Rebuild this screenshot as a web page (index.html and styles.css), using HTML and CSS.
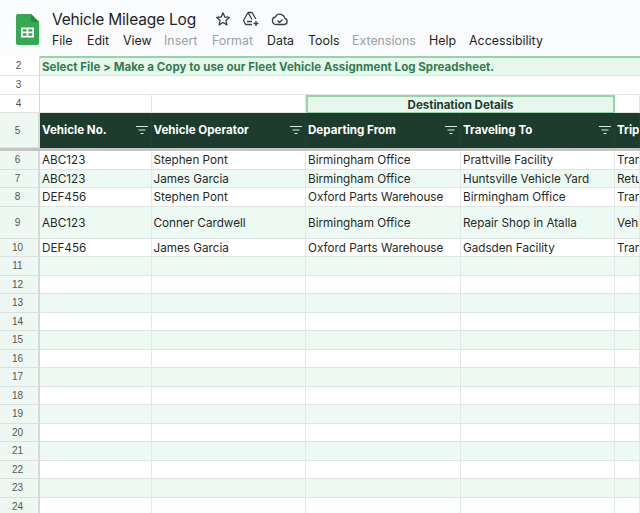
FILE: index.html
```html
<!DOCTYPE html>
<html lang="en">
<head>
<meta charset="utf-8">
<title>Vehicle Mileage Log</title>
<link rel="stylesheet" href="styles.css">
</head>
<body>
<header class="topbar">
  <svg class="logo" width="23" height="31" viewBox="0 0 23 31">
    <path d="M2 0H15L23 8V29a2 2 0 0 1-2 2H2a2 2 0 0 1-2-2V2a2 2 0 0 1 2-2z" fill="#34a853"/>
    <path d="M15 0L23 8H17a2 2 0 0 1-2-2z" fill="#1e8e3e"/>
    <path d="M5 13.500H18V23.500H5zM6.700 15.200V17.600H10.600V15.200zM12.300 15.200V17.600H16.300V15.200zM6.700 19.300V21.800H10.600V19.300zM12.300 19.300V21.800H16.300V19.300z" fill="#fff" fill-rule="evenodd"/>
  </svg>
  <div class="docinfo">
    <div class="titleline">
      <span class="title">Vehicle Mileage Log</span>
      <span class="icons">
        <svg width="16" height="16" viewBox="0 0 16 16" fill="none" stroke="#3c4043" stroke-width="1.300" stroke-linejoin="round"><path d="M8 1.800l1.800 4.200 4.500.4-3.400 3 1 4.500L8 11.500l-3.900 2.400 1-4.500-3.400-3 4.500-.4z"/></svg>
        <svg width="18" height="16" viewBox="0 0 18 16" fill="none" stroke="#3c4043" stroke-width="1.300" stroke-linejoin="round"><path d="M6 1.500h4l3.800 6.500M6 1.500L1.500 9.500l2.200 4h6.300M6 1.500l4 7M5 10.500h5"/><path d="M14 10v5M11.500 12.500h5" stroke-width="1.400"/></svg>
        <svg width="18" height="14" viewBox="0 0 18 14" fill="none" stroke="#3c4043" stroke-width="1.300" stroke-linejoin="round"><path d="M5 12.500a3.800 3.800 0 0 1-.6-7.500 5 5 0 0 1 9.400 1.400 3.100 3.100 0 0 1-.5 6.100z"/><path d="M6.500 8.500l2 2 3-3"/></svg>
      </span>
    </div>
    <nav class="menu">
      <span class="m-file">File</span><span class="m-edit">Edit</span><span class="m-view">View</span><span class="m-insert off">Insert</span><span class="m-format off">Format</span><span class="m-data">Data</span><span class="m-tools">Tools</span><span class="m-ext off">Extensions</span><span class="m-help">Help</span><span>Accessibility</span>
    </nav>
  </div>
</header>

<main class="sheet">
  <div class="row h-note">
    <div class="rh rh-plain">2</div>
    <div class="note">Select File &gt; Make a Copy to use our Fleet Vehicle Assignment Log Spreadsheet.</div>
  </div>
  <div class="row h-blank">
    <div class="rh rh-plain">3</div>
    <div class="wide"></div>
  </div>
  <div class="row h-blank">
    <div class="rh rh-plain">4</div>
    <div class="c"></div><div class="c"></div>
    <div class="group">Destination Details</div>
    <div class="c"></div>
  </div>
  <div class="row h-head">
    <div class="rh">5</div>
    <div class="hc"><span>Vehicle No.</span><svg class="flt" width="12" height="8" viewBox="0 0 12 8"><path d="M0 .5h12M2.500 4h7M4.500 7.500h3" stroke="#dfe6e2" stroke-width="1"/></svg></div>
    <div class="hc"><span>Vehicle Operator</span><svg class="flt" width="12" height="8" viewBox="0 0 12 8"><path d="M0 .5h12M2.500 4h7M4.500 7.500h3" stroke="#dfe6e2" stroke-width="1"/></svg></div>
    <div class="hc"><span>Departing From</span><svg class="flt" width="12" height="8" viewBox="0 0 12 8"><path d="M0 .5h12M2.500 4h7M4.500 7.500h3" stroke="#dfe6e2" stroke-width="1"/></svg></div>
    <div class="hc"><span>Traveling To</span><svg class="flt" width="12" height="8" viewBox="0 0 12 8"><path d="M0 .5h12M2.500 4h7M4.500 7.500h3" stroke="#dfe6e2" stroke-width="1"/></svg></div>
    <div class="hc"><span>Trip</span></div>
  </div>
  <div class="freeze"></div>
  <div class="row h-data">
    <div class="rh">6</div><div class="c">ABC123</div><div class="c">Stephen Pont</div><div class="c">Birmingham Office</div><div class="c">Prattville Facility</div><div class="c">Transport</div>
  </div>
  <div class="row h-data alt">
    <div class="rh">7</div><div class="c">ABC123</div><div class="c">James Garcia</div><div class="c">Birmingham Office</div><div class="c">Huntsville Vehicle Yard</div><div class="c">Return</div>
  </div>
  <div class="row h-data">
    <div class="rh">8</div><div class="c">DEF456</div><div class="c">Stephen Pont</div><div class="c">Oxford Parts Warehouse</div><div class="c">Birmingham Office</div><div class="c">Transport</div>
  </div>
  <div class="row h-tall alt">
    <div class="rh">9</div><div class="c">ABC123</div><div class="c">Conner Cardwell</div><div class="c">Birmingham Office</div><div class="c">Repair Shop in Atalla</div><div class="c">Vehicle</div>
  </div>
  <div class="row h-data">
    <div class="rh">10</div><div class="c">DEF456</div><div class="c">James Garcia</div><div class="c">Oxford Parts Warehouse</div><div class="c">Gadsden Facility</div><div class="c">Transport</div>
  </div>
  <div class="row h-data alt"><div class="rh">11</div><div class="c"></div><div class="c"></div><div class="c"></div><div class="c"></div><div class="c"></div></div>
  <div class="row h-data"><div class="rh">12</div><div class="c"></div><div class="c"></div><div class="c"></div><div class="c"></div><div class="c"></div></div>
  <div class="row h-data alt"><div class="rh">13</div><div class="c"></div><div class="c"></div><div class="c"></div><div class="c"></div><div class="c"></div></div>
  <div class="row h-data"><div class="rh">14</div><div class="c"></div><div class="c"></div><div class="c"></div><div class="c"></div><div class="c"></div></div>
  <div class="row h-data alt"><div class="rh">15</div><div class="c"></div><div class="c"></div><div class="c"></div><div class="c"></div><div class="c"></div></div>
  <div class="row h-data"><div class="rh">16</div><div class="c"></div><div class="c"></div><div class="c"></div><div class="c"></div><div class="c"></div></div>
  <div class="row h-data alt"><div class="rh">17</div><div class="c"></div><div class="c"></div><div class="c"></div><div class="c"></div><div class="c"></div></div>
  <div class="row h-data"><div class="rh">18</div><div class="c"></div><div class="c"></div><div class="c"></div><div class="c"></div><div class="c"></div></div>
  <div class="row h-data alt"><div class="rh">19</div><div class="c"></div><div class="c"></div><div class="c"></div><div class="c"></div><div class="c"></div></div>
  <div class="row h-data"><div class="rh">20</div><div class="c"></div><div class="c"></div><div class="c"></div><div class="c"></div><div class="c"></div></div>
  <div class="row h-data alt"><div class="rh">21</div><div class="c"></div><div class="c"></div><div class="c"></div><div class="c"></div><div class="c"></div></div>
  <div class="row h-data"><div class="rh">22</div><div class="c"></div><div class="c"></div><div class="c"></div><div class="c"></div><div class="c"></div></div>
  <div class="row h-data alt"><div class="rh">23</div><div class="c"></div><div class="c"></div><div class="c"></div><div class="c"></div><div class="c"></div></div>
  <div class="row h-data"><div class="rh">24</div><div class="c"></div><div class="c"></div><div class="c"></div><div class="c"></div><div class="c"></div></div>
</main>
</body>
</html>
```
FILE: styles.css
```css
* { box-sizing: border-box; }
html, body { margin: 0; height: 100%; overflow: hidden; background: #fff; }
body { font-family: Inter, "Liberation Sans", sans-serif; color: #1f1f1f; }

.topbar { height: 56px; background: #f9fbfd; display: flex; padding: 14px 0 0 16px; gap: 13px; }
.logo { flex: none; }
.docinfo { display: flex; flex-direction: column; margin-top: -7px; }
.titleline { display: flex; align-items: center; height: 24px; }
.title { font-size: 15.500px; letter-spacing: -.2px; width: 163px; white-space: nowrap; }
.icons { display: flex; align-items: center; gap: 11px; }
.menu { display: flex; font-size: 12.400px; margin-top: 1px; line-height: 18px; white-space: nowrap; }
.menu span { display: block; }
.m-file { width: 35px; }
.m-edit { width: 36px; }
.m-view { width: 41px; }
.m-insert { width: 48px; }
.m-format { width: 55px; }
.m-data { width: 41px; }
.m-tools { width: 44px; }
.m-ext { width: 77px; }
.m-help { width: 40px; }
.off { color: #9aa0a6; }

.sheet { display: flex; flex-direction: column; }
.row { display: grid; grid-template-columns: 40px 111.500px 154.500px 155px 154px 1fr; }
.h-note { height: 20px; grid-template-columns: 40px 1fr; }
.h-blank { height: 18.500px; }
.h-head { height: 35px; }
.h-data { height: 18.500px; }
.h-tall { height: 32px; }
.alt { background: #edf9f3; }

.rh { display: flex; align-items: center; justify-content: center; font: 10px "Liberation Sans", sans-serif; color: #555; padding-right: 3px; background: #eef8f2; border-right: 2px solid #d4d8d6; border-bottom: 1px solid #dcdfde; }
.rh-plain { background: #fff; border-right: 1px solid #d8d8d8; border-bottom: 1px solid #e2e2e2; padding-right: 2px; }

.c { display: flex; align-items: center; padding: 1px 0 0 2px; font-size: 11.700px; color: #1f2a26; white-space: nowrap; overflow: hidden; border-right: 1px solid #e4e8e6; border-bottom: 1px solid #dfe5e2; min-width: 0; }
.wide { grid-column: 2 / -1; border-bottom: 1px solid #e4e4e4; }

.note { display: flex; align-items: center; padding-left: 2px; background: #e8f7ec; border-top: 2px solid #93d5a8; border-bottom: 1px solid #dfe5e2; color: #2f7d4f; font-size: 11.500px; font-weight: 700; letter-spacing: .04px; white-space: nowrap; }

.group { grid-column: span 2; display: flex; align-items: center; justify-content: center; padding-top: 1px; background: #e8f7ec; border: 2px solid #93d5a8; border-bottom-width: 1px; color: #1d3c2d; font-size: 11.500px; font-weight: 700; }

.hc { display: flex; align-items: center; justify-content: space-between; background: #1d3c2d; color: #fff; font-size: 11.600px; font-weight: 700; padding: 0 3px 1px 2px; white-space: nowrap; overflow: hidden; border-right: 1px solid #24402f; }
.flt { flex: none; }

.freeze { height: 3px; background: #c4c4c4; flex: none; }
```
